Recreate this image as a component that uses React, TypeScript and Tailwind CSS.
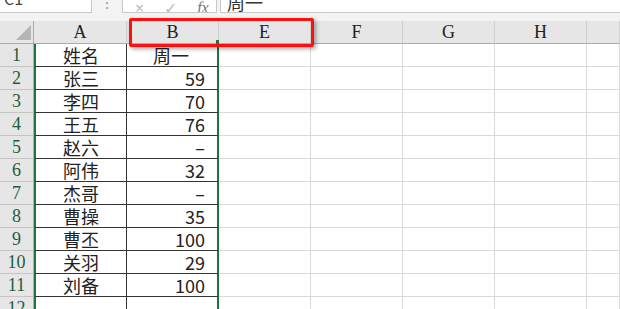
import React from "react";

const rows: [string, string][] = [
  ["姓名", "周一"],
  ["张三", "59"],
  ["李四", "70"],
  ["王五", "76"],
  ["赵六", "–"],
  ["阿伟", "32"],
  ["杰哥", "–"],
  ["曹操", "35"],
  ["曹丕", "100"],
  ["关羽", "29"],
  ["刘备", "100"],
];

const cols = ["A", "B", "E", "F", "G", "H", ""];

const cellFont = { fontFamily: '"Noto Sans CJK SC", "Liberation Sans", sans-serif' };
const headFont = { fontFamily: '"Liberation Serif", "Noto Sans CJK SC", serif' };

export default function App() {
  return (
    <div className="relative h-[309px] w-[620px] overflow-hidden bg-white">
      {/* formula bar, scrolled so only its lower edge shows */}
      <div className="flex h-[13px] bg-[#f3f3f3]">
        <div className="w-[92px] overflow-hidden border-b border-r border-[#c8c8c8] bg-white pl-1">
          <div className="-mt-[12px] text-[16px] leading-[20px] text-[#444]" style={cellFont}>
            C1
          </div>
        </div>
        <div className="flex w-[30px] justify-center overflow-hidden text-[14px] leading-[6px] text-[#999]">
          ⋮
        </div>
        <div className="flex w-[95px] items-end gap-5 overflow-hidden border-b border-l border-r border-[#c8c8c8] bg-white px-3">
          <span className="-mb-[8px] text-[16px] text-[#bbb]">×</span>
          <span className="-mb-[8px] text-[16px] text-[#bbb]">✓</span>
          <span className="-mb-[8px] text-[16px] italic text-[#777]" style={headFont}>
            fx
          </span>
        </div>
        <div className="ml-[3px] flex-1 overflow-hidden border-b border-l border-[#c8c8c8] bg-white pl-[6px]">
          <div className="-mt-[9px] text-[18px] leading-[22px] text-[#333]" style={cellFont}>
            周一
          </div>
        </div>
      </div>
      <div className="h-[8px] bg-[#f3f3f3]" />

      <div className="grid grid-cols-[34px_93px_92px_92px_92px_92px_92px_1fr]">
        {/* column headers */}
        <div className="relative h-[23px] border-b border-r border-[#ababab] bg-[#e6e6e6]">
          <div className="absolute bottom-[3px] right-[2px] h-0 w-0 border-b-[15px] border-l-[15px] border-b-[#b5b5b5] border-l-transparent" />
        </div>
        {cols.map((c, i) => (
          <div
            key={i}
            className="relative flex h-[23px] items-center justify-center border-b border-r border-[#ababab] border-r-[#cfcfcf] bg-[#e6e6e6] text-[18px] text-[#222]"
            style={headFont}
          >
            {c}
            {c === "B" && (
              <span className="absolute -bottom-[1px] -right-[2px] h-[4px] w-[4px] bg-[#217346]" />
            )}
          </div>
        ))}

        {/* data rows */}
        {[...rows, ["", ""] as [string, string]].map(([name, val], r) => {
          const filled = r < rows.length;
          const dark = filled ? "border-b-[#333]" : "border-b-[#d4d4d4]";
          return (
            <React.Fragment key={r}>
              <div
                className="flex h-[23px] items-center justify-center border-b border-r border-[#c4c4c4] border-r-[#ababab] bg-[#e6e6e6] text-[18px] text-[#1f5c3d]"
                style={headFont}
              >
                {r + 1}
              </div>
              <div
                className={`flex h-[23px] items-center justify-center border-b border-l-2 border-r border-l-[#217346] border-r-[#333] text-[18px] leading-[20px] text-[#222] ${dark}`}
                style={cellFont}
              >
                {name}
              </div>
              <div
                className={`flex h-[23px] items-center border-b border-r-2 border-r-[#217346] pr-[12px] text-[18px] leading-[20px] text-[#222] ${dark} ${
                  r === 0 ? "justify-center pl-[10px]" : "justify-end"
                }`}
                style={cellFont}
              >
                {val}
              </div>
              {[0, 1, 2, 3, 4].map((k) => (
                <div key={k} className="h-[23px] border-b border-r border-[#d9d9d9]" />
              ))}
            </React.Fragment>
          );
        })}
      </div>

      {/* highlight around the B/E headers */}
      <div className="absolute left-[129px] top-[18px] h-[29px] w-[185px] rounded-[2px] border-[3px] border-[#ff1010] shadow-[2px_2px_4px_rgba(0,0,0,0.35)]" />
    </div>
  );
}
